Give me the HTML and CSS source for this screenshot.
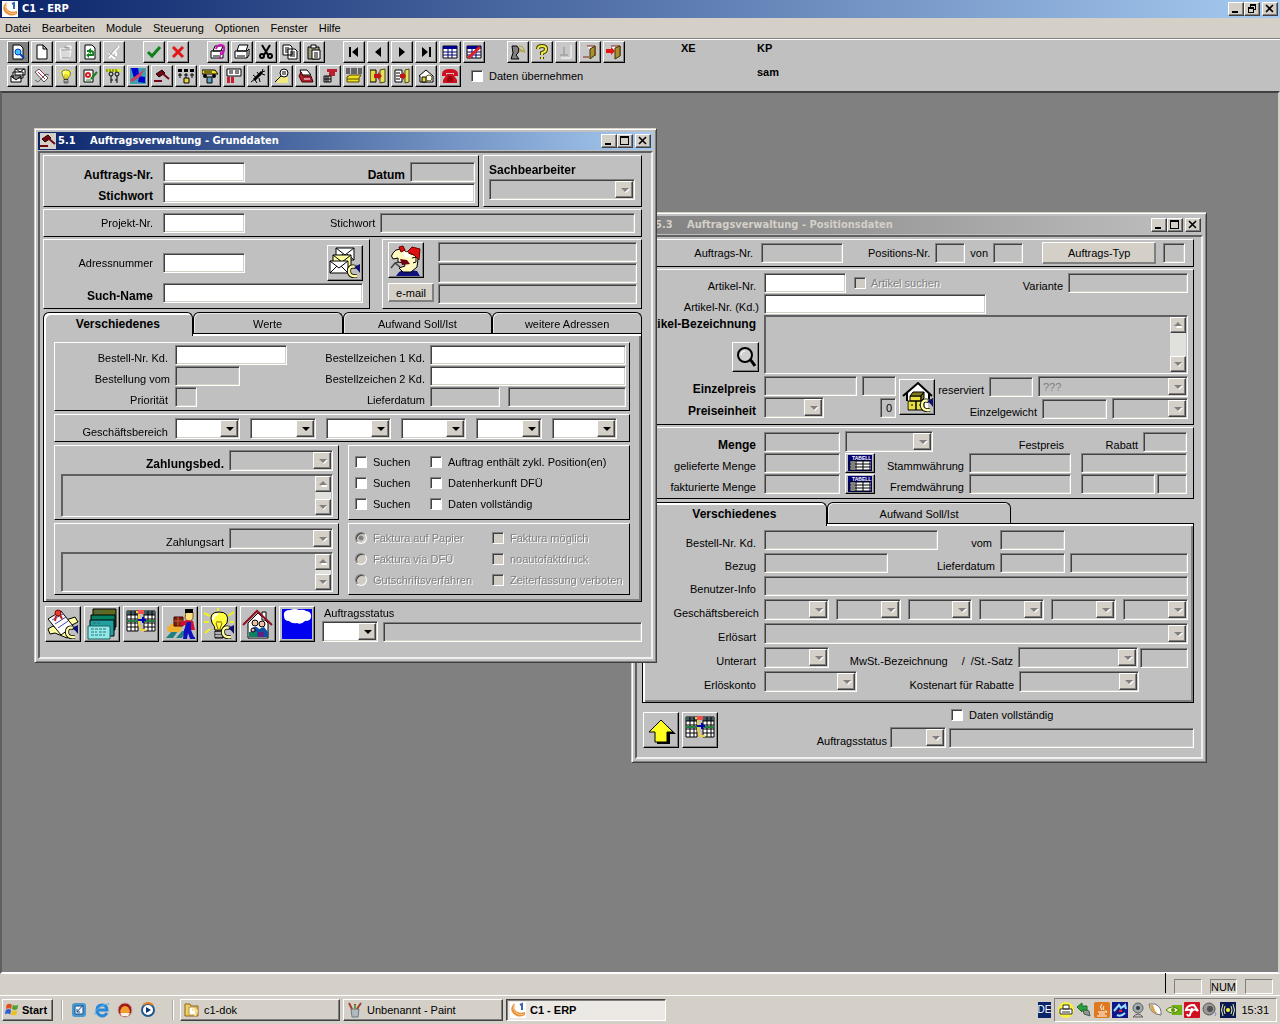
FILE: index.html
```html
<!DOCTYPE html>
<html lang="de">
<head>
    <meta charset="UTF-8">
    <meta name="viewport" content="width=device-width, initial-scale=1.0">
    <title>C1 - ERP</title>
    <link rel="stylesheet" href="styles.css">
</head>
<body>
    <!-- Shared icons -->
    <svg class="defs" aria-hidden="true">
        <symbol id="logo" viewBox="0 0 16 16">
            <rect width="16" height="16" fill="#fff"/>
            <path d="M5 1C0 4 0 10 5 13Q9 16 15 13V10Q9 12 6 9T5 1Z" fill="#e8923a"/>
            <path d="M4 3Q2 8 6 11T14 12" stroke="#f8c890" fill="none"/>
            <path d="M10 3l2-1v6" stroke="#3868b0" stroke-width="2" fill="none"/>
        </symbol>
        <symbol id="min" viewBox="0 0 12 10"><path d="M2 7h6v2H2z"/></symbol>
        <symbol id="max" viewBox="0 0 12 10"><path d="M1 0h9v9H1zM2 2v6h7V2z" fill-rule="evenodd"/></symbol>
        <symbol id="restore" viewBox="0 0 12 10"><path d="M4 0h6v6H8v3H2V3h2zM5 2v1h3v2h1V2zM3 5v3h4V5z" fill-rule="evenodd"/></symbol>
        <symbol id="close" viewBox="0 0 12 10"><path d="M2 1l7 7M9 1L2 8" stroke="#000" stroke-width="1.6"/></symbol>
        <symbol id="up" viewBox="0 0 8 8"><path d="M5 2L9 7H2z" fill="#fff"/><path d="M4 1L8 5H0z" fill="#808080"/></symbol>
        <symbol id="down" viewBox="0 0 8 8"><path d="M1 3h7L5 7z" fill="#fff"/><path d="M0 2h8L4 6z" fill="#808080"/></symbol>
        <symbol id="hammer" viewBox="0 0 16 16">
            <path d="M2 6L8 2l3 3-6 4z" fill="#700818" stroke="#200"/>
            <path d="M8 5l7 6" stroke="#700818" stroke-width="2"/>
            <path d="M0 12h8v2H0z" fill="#700818"/>
        </symbol>
        <symbol id="hook" viewBox="0 0 14 14">
            <path d="M10 3Q3 1 3 7t8 5" fill="none" stroke="#000" stroke-width="4"/>
            <path d="M10 3Q3 1 3 7t8 5" fill="none" stroke="#ffffa0" stroke-width="2.5"/>
            <path d="M8 3l6-3v9q-3-4-6-6z" fill="#101070"/>
        </symbol>
        <symbol id="bulb" viewBox="0 0 32 32">
            <path d="M1 5l6 3M1 14h5M2 25l5-4M31 4l-6 4M27 14h4M15 0v3" stroke="#f0f020" stroke-width="2"/>
            <path d="M12 22Q12 18 9 15 5 4 16 4t8 11q-4 3-4 7z" fill="#ffff40" stroke="#000"/>
            <path d="M10 12Q10 7 15 6" stroke="#fff" stroke-width="2" fill="none"/>
            <path d="M13 15l2 6M19 15l-2 6M13 14h6" stroke="#806000" fill="none"/>
            <path d="M12 23h8v7h-8z" fill="#606060" stroke="#000"/>
            <path d="M12 25h8M12 28h8" stroke="#fff"/>
        </symbol>
        <symbol id="sheets" viewBox="0 0 32 32">
            <path d="M2 3h11v20H2zM19 3h11v20H19z" fill="#fff" stroke="#000"/>
            <path d="M2 3h11v4H2zM19 3h11v4H19z" fill="#405860"/>
            <path d="M2 7h11M2 11h11M2 15h11M2 19h11M6 3v20M10 3v20M19 7h11M19 11h11M19 15h11M19 19h11M23 3v20M27 3v20" stroke="#000"/>
            <path d="M2 13h11M19 13h11" stroke="#208040" stroke-width="2"/>
            <path d="M13 2h6v4h-6z" fill="#f05050"/>
            <path d="M13 4h-2M14 6v10l2 6h5" stroke="#f0d040" stroke-width="2" fill="none"/>
            <path d="M13 12h8M18 9v6" stroke="#0000b0" stroke-width="2" fill="none"/>
        </symbol>
        <symbol id="tabell" viewBox="0 0 24 16">
            <path d="M0 0h24v16H0z" fill="#000070"/>
            <path d="M2 6h21v9H2z" fill="#fff"/>
            <path d="M2 6h21M2 9h21M2 12h21M2 15h21M2 6v9M8 6v9M15 6v9M22 6v9" stroke="#000"/>
            <path d="M3 7h4v8H3z" fill="#808080"/>
            <text x="4" y="5">TABELL</text>
        </symbol>
    </svg>

    <header class="titlebar">
        <svg class="i16"><use href="#logo"/></svg>
        <h1>C1 - ERP</h1>
        <div class="winbtns">
            <button aria-label="Minimieren"><svg><use href="#min"/></svg></button>
            <button aria-label="Verkleinern"><svg><use href="#restore"/></svg></button>
            <button aria-label="Schließen"><svg><use href="#close"/></svg></button>
        </div>
    </header>
    <nav class="menu">
        <a href="#">Datei</a>
        <a href="#">Bearbeiten</a>
        <a href="#">Module</a>
        <a href="#">Steuerung</a>
        <a href="#">Optionen</a>
        <a href="#">Fenster</a>
        <a href="#">Hilfe</a>
    </nav>

    <div class="toolbar">
        <div class="tools">
            <div class="toolrow">
                <div class="group">
                    <button class="on" aria-label="Suchmaske"><svg viewBox="0 0 16 16"><path d="M3 1h7l3 3v11H3z" fill="#fff" stroke="#000"/><circle cx="8" cy="8" r="3" fill="#40c0ff" stroke="#0040c0"/><path d="M10 10l4 4" stroke="#0040c0" stroke-width="2"/></svg></button>
                    <button aria-label="Neu"><svg viewBox="0 0 16 16"><path d="M3 1h6l4 4v10H3zM9 1v4h4" fill="#fff" stroke="#000"/></svg></button>
                    <button aria-label="Öffnen" disabled><svg viewBox="0 0 16 16"><path d="M2 5h5l1 2h5l-2 8H3zM9 2h4v3" fill="#d8d8d8" stroke="#fff"/><path d="M3 6h8M6 3l5 1M4 14h8" stroke="#989898"/></svg></button>
                    <button aria-label="Aktualisieren"><svg viewBox="0 0 16 16"><path d="M3 1h7l3 3v11H3z" fill="#fff" stroke="#000"/><path d="M5 7h4q3 0 2 4H6" fill="none" stroke="#108020" stroke-width="2"/><path d="M9 4L5 7l4 3zM7 9v5l-3-3z" fill="#108020"/></svg></button>
                    <button aria-label="Löschen" disabled><svg viewBox="0 0 16 16"><path d="M3 14L13 2M3 9l6 6M10 8v4" stroke="#fff" stroke-width="2"/><path d="M2 13L12 2M3 8l6 5" stroke="#a0a0a0"/></svg></button>
                </div>
                <div class="group">
                    <button aria-label="OK"><svg viewBox="0 0 16 16"><path d="M2 8l4 4 8-9" fill="none" stroke="#108018" stroke-width="3"/></svg></button>
                    <button aria-label="Abbrechen"><svg viewBox="0 0 16 16"><path d="M3 3l10 10M13 3L3 13" stroke="#e01818" stroke-width="3"/></svg></button>
                </div>
                <div class="group">
                    <button aria-label="Druckvorschau"><svg viewBox="0 0 16 16"><path d="M5 2h8l-2 5H3zM1 7h12v7H1zM3 12h8" fill="#fff" stroke="#000"/><path d="M6 5q1-4 5-4t3 5-3 3v2M10 13v2" fill="none" stroke="#d010c0" stroke-width="2"/></svg></button>
                    <button aria-label="Drucken"><svg viewBox="0 0 16 16"><path d="M5 1h9l-2 6H3zM1 7h12v7H1zM3 12h8M13 7l2-2v6l-2 3" fill="#fff" stroke="#000"/></svg></button>
                    <button aria-label="Ausschneiden"><svg viewBox="0 0 16 16"><path d="M4 1l6 10M12 1L6 11" stroke="#000" stroke-width="2"/><circle cx="4" cy="12" r="2" fill="none" stroke="#000" stroke-width="2"/><circle cx="12" cy="12" r="2" fill="none" stroke="#000" stroke-width="2"/></svg></button>
                    <button aria-label="Kopieren"><svg viewBox="0 0 16 16"><path d="M1 1h7l2 2v8H1zM6 5h7l2 2v8H6z" fill="#fff" stroke="#000"/><path d="M3 4h4M3 6h3M3 8h3M8 8h5M8 10h5M8 12h5" stroke="#000"/></svg></button>
                    <button aria-label="Einfügen"><svg viewBox="0 0 16 16"><path d="M2 3h11v12H2z" fill="#a0a080" stroke="#000"/><path d="M5 1h5v3H5zM6 6h8v9H6z" fill="#fff" stroke="#000"/><path d="M8 9h4M8 11h4M8 13h4" stroke="#000"/></svg></button>
                </div>
                <div class="group">
                    <button aria-label="Erster Satz"><svg viewBox="0 0 16 16"><path d="M3 3h2v10H3zM12 3v10L6 8z"/></svg></button>
                    <button aria-label="Voriger Satz"><svg viewBox="0 0 16 16"><path d="M11 3v10L5 8z"/></svg></button>
                    <button aria-label="Nächster Satz"><svg viewBox="0 0 16 16"><path d="M5 3v10l6-5z"/></svg></button>
                    <button aria-label="Letzter Satz"><svg viewBox="0 0 16 16"><path d="M4 3v10l6-5zM11 3h2v10h-2z"/></svg></button>
                    <button aria-label="Tabelle"><svg viewBox="0 0 16 16"><path d="M1 2h14v12H1z" fill="#fff" stroke="#000"/><path d="M1 2h14v3H1z" fill="#000090"/><path d="M1 8h14M1 11h14M6 5v9M10 5v9" stroke="#000070"/></svg></button>
                    <button aria-label="Tabelle aus"><svg viewBox="0 0 16 16"><path d="M1 2h14v12H1z" fill="#fff" stroke="#000"/><path d="M1 2h14v3H1z" fill="#000090"/><path d="M1 8h14M1 11h14M6 5v9M10 5v9" stroke="#000070"/><path d="M2 14L14 3" stroke="#e02020" stroke-width="3"/></svg></button>
                </div>
                <div class="group wide">
                    <button aria-label="Sprache"><svg viewBox="0 0 16 16"><path d="M2 2h5l2 3-1 4-2 2 3 4H1l2-6z" fill="#808080" stroke="#000"/><path d="M9 5q3 0 3 3M9 2q6 0 5 7M9 7h6" fill="none" stroke="#b0a020"/></svg></button>
                    <button aria-label="Hilfe"><svg viewBox="0 0 16 16"><path d="M4 5q0-3 4-3t4 3-4 4v2M8 13v2" fill="none" stroke="#404000" stroke-width="4"/><path d="M4 5q0-3 4-3t4 3-4 4v2M8 13v2" fill="none" stroke="#f0e840" stroke-width="2"/></svg></button>
                    <button aria-label="Protokoll" disabled><svg viewBox="0 0 16 16"><path d="M6 3v8M2 11h8" stroke="#909090"/><path d="M13 1v13H3" stroke="#fff" fill="none"/></svg></button>
                    <button aria-label="Modul schließen"><svg viewBox="0 0 16 16"><path d="M5 2h8v10" fill="#fff" stroke="#802010"/><path d="M8 5l5-3v9l-5 4z" fill="#a89030" stroke="#403000"/><path d="M1 13h6" stroke="#802010"/></svg></button>
                    <button aria-label="Beenden"><svg viewBox="0 0 16 16"><path d="M5 2h9v10" fill="#fff" stroke="#802010"/><path d="M9 4l5-2v10l-5 3z" fill="#a89030" stroke="#403000"/><path d="M9 7L5 3v2H0v4h5v2z" fill="#e01818"/></svg></button>
                </div>
            </div>
            <div class="toolrow">
                <div class="group">
                    <button aria-label="Adressen"><svg viewBox="0 0 16 16"><path d="M5 1h10v6H5zM3 4h10v6H3zM1 8h10v6H1z" fill="#fff" stroke="#000"/><path d="M1 8l5 4 5-4M6 1l4 3 4-3" stroke="#000" fill="none"/></svg></button>
                    <button aria-label="Angebote"><svg viewBox="0 0 16 16"><path d="M1 4l4-3 9 9-4 4z" fill="#fff" stroke="#505050"/><path d="M4 4l7 7M6 2l3 3" stroke="#c02040"/><path d="M1 12l3 2 8-8 3 1" fill="none" stroke="#606060"/></svg></button>
                    <button aria-label="Ideen"><svg viewBox="0 0 32 32"><use href="#bulb"/></svg></button>
                    <button aria-label="Notizen"><svg viewBox="0 0 16 16"><path d="M2 2h9v12H2z" fill="#fff" stroke="#000"/><circle cx="6" cy="7" r="2" fill="none" stroke="#d02020" stroke-width="2"/><path d="M4 12h5" stroke="#108020"/><path d="M9 11l6-7" stroke="#108020" stroke-width="2"/></svg></button>
                    <button aria-label="Schlüssel"><svg viewBox="0 0 16 16"><path d="M0 1h15v3H0z" fill="#d8e830"/><path d="M1 1v3M4 1v3M7 1v3M10 1v3" stroke="#506000"/><circle cx="5" cy="6" r="2" fill="none" stroke="#000"/><circle cx="11" cy="6" r="2" fill="none" stroke="#000"/><path d="M5 8v7M5 12h2M11 8v7M9 12h2" stroke="#000"/></svg></button>
                    <button aria-label="Grafik"><svg viewBox="0 0 16 16"><path d="M0 0h16v16H0z" fill="#40a0b0"/><path d="M1 0h7l1 6-5 4zM9 8l6 1v6l-7-1z" fill="#0000d0"/><path d="M0 12L15 1l-5 8-8 5z" fill="#c84060"/></svg></button>
                    <button aria-label="Aufträge"><svg><use href="#hammer"/></svg></button>
                    <button aria-label="Struktur"><svg viewBox="0 0 16 16"><path d="M0 1h4v3H0zM6 1h4v3H6zM12 1h4v3h-4z"/><path d="M2 5v5M8 5v5M14 5v5M0 7h4M6 7h4M12 7h4" stroke="#000"/><path d="M6 10h5v5H6z" fill="#e8d840" stroke="#000"/></svg></button>
                    <button aria-label="Lieferung"><svg viewBox="0 0 16 16"><path d="M0 2h13l3 4H0z" fill="#f0e020" stroke="#000"/><path d="M2 4h8" stroke="#000"/><circle cx="3" cy="8" r="2"/><circle cx="12" cy="8" r="2"/><path d="M5 9h5v6H5z" fill="#60a0c0" stroke="#000"/></svg></button>
                    <button aria-label="Fertigung"><svg viewBox="0 0 16 16"><path d="M1 1h14v7H1z" fill="#fff" stroke="#000"/><path d="M3 3h4M3 5h4M9 3h4M9 5h4" stroke="#000"/><path d="M1 9h3v6H1zM5 9h3v6H5z" fill="#c02030"/></svg></button>
                    <button aria-label="Fehler"><svg viewBox="0 0 16 16"><path d="M1 14l4-3M3 7l4 3M7 4l3 4M12 6l3 1M9 10l1 4M5 12l2 3M12 4l1-3M12 4l3-1" stroke="#000"/><path d="M4 12L12 4" stroke="#000" stroke-width="3"/></svg></button>
                    <button aria-label="Suche"><svg viewBox="0 0 16 16"><path d="M3 9h11v6H3z" fill="#f0e880"/><circle cx="10" cy="5" r="4" fill="#fff" stroke="#000"/><path d="M7 8L1 14M8 4h4M8 6h4" stroke="#000"/></svg></button>
                    <button aria-label="Rechnung"><svg viewBox="0 0 16 16"><path d="M2 2h7l4 5H4z" fill="#fff" stroke="#000"/><path d="M1 8l2-4 2 4h8l2 6H4z" fill="#b02030" stroke="#400"/><path d="M6 11h6" stroke="#fff"/></svg></button>
                    <button aria-label="Anruf"><svg viewBox="0 0 16 16"><path d="M5 1h10v3h-2v4H7V4H5z" fill="#b82030"/><path d="M2 8h7v6H2z" fill="#d0d0d0" stroke="#000"/><path d="M4 8v6M6 8v6M2 11h7" stroke="#000"/></svg></button>
                    <button aria-label="Barcode"><svg viewBox="0 0 16 16"><path d="M1 0v6M3 0v6M6 0v6M8 0v6M10 0v6M13 0v6M15 0v6" stroke="#000"/><path d="M1 9l3-2h11l-2 3v4H1z" fill="#f0e020" stroke="#504800"/><path d="M1 11h12" stroke="#504800"/></svg></button>
                    <button aria-label="Wareneingang"><svg viewBox="0 0 16 16"><path d="M0 2h6v12H0z" fill="#e8d840" stroke="#000"/><path d="M10 2l5-1v13l-5 1z" fill="#e8e060" stroke="#504800"/><path d="M4 6h4V4l4 4-4 4v-2H4z" fill="#c01818"/></svg></button>
                    <button aria-label="Warenausgang"><svg viewBox="0 0 16 16"><path d="M1 2h7v12H1z" fill="#fff" stroke="#000"/><path d="M2 5h4M2 8h4M2 11h4" stroke="#000"/><path d="M11 2l4-1v13l-4 1z" fill="#e8e060" stroke="#504800"/><path d="M6 6h3V4l3 4-3 4v-2H6z" fill="#c01818"/></svg></button>
                    <button aria-label="Lager"><svg viewBox="0 0 16 16"><path d="M1 8l7-6 7 6v6H2V8z" fill="#fff" stroke="#000"/><path d="M4 9h4v5H4z" fill="#e0d840" stroke="#000"/><circle cx="11" cy="10" r="3" fill="none" stroke="#606020"/></svg></button>
                    <button aria-label="Telefon"><svg viewBox="0 0 16 16"><path d="M0 6q0-5 8-5t8 5v2h-4V5H4v3H0zM5 6h6l4 6v3H1v-3z" fill="#d01020"/><path d="M6 9h4M5 11h6M5 13h6" stroke="#600"/></svg></button>
                </div>
                <label class="check"><input type="checkbox">Daten übernehmen</label>
            </div>
        </div>
        <div class="info">
            <b>XE</b><b>KP</b>
            <b></b><b>sam</b>
        </div>
    </div>

    <main class="workspace">
        <!-- 5.3 Positionsdaten -->
        <section class="window positions">
            <div class="titlebar inactive">
                <svg class="i16"><use href="#hammer"/></svg>
                <h2><span>5.3</span>Auftragsverwaltung - Positionsdaten</h2>
                <div class="winbtns">
                    <button aria-label="Minimieren"><svg><use href="#min"/></svg></button>
                    <button aria-label="Maximieren"><svg><use href="#max"/></svg></button>
                    <button aria-label="Schließen"><svg><use href="#close"/></svg></button>
                </div>
            </div>
            <div class="client">
                <div class="panel row head">
                    <label class="lbl" for="p-auftrag">Auftrags-Nr.</label>
                    <input class="w82" id="p-auftrag" disabled>
                    <label for="p-pos" class="push">Positions-Nr.</label>
                    <input class="w30" id="p-pos" disabled>
                    <label for="p-von">von</label>
                    <input class="w30" id="p-von" disabled>
                    <button class="btn typ">Auftrags-Typ</button>
                    <input class="w22" aria-label="Auftrags-Typ" disabled>
                </div>

                <div class="panel article">
                    <div class="row">
                        <label class="lbl" for="p-artikel">Artikel-Nr.</label>
                        <input class="w82" id="p-artikel">
                        <label class="check off"><input type="checkbox" disabled>Artikel suchen</label>
                        <label class="end" for="p-variante">Variante</label>
                        <input class="w120" id="p-variante" disabled>
                    </div>
                    <div class="row">
                        <label class="lbl near" for="p-kd">Artikel-Nr. (Kd.)</label>
                        <input class="w222" id="p-kd">
                    </div>
                    <div class="row memo-row">
                        <div class="lbl describe">
                            <label for="p-bez"><b>Artikel-Bezeichnung</b></label>
                            <button class="icon lens" aria-label="Artikel suchen"><svg viewBox="0 0 20 20"><circle cx="9" cy="8" r="7" fill="#d0d0d0" stroke="#000" stroke-width="2"/><path d="M5 8q0-4 4-4" stroke="#fff" fill="none"/><path d="M14 12l5 7" stroke="#000" stroke-width="3"/></svg></button>
                        </div>
                        <div class="memo">
                            <textarea id="p-bez" disabled></textarea>
                            <div class="scroll"><button aria-label="Nach oben" disabled><svg><use href="#up"/></svg></button><button aria-label="Nach unten" disabled><svg><use href="#down"/></svg></button></div>
                        </div>
                    </div>
                    <div class="split">
                        <div class="rows">
                            <div class="row">
                                <label class="lbl" for="p-preis"><b>Einzelpreis</b></label>
                                <input class="w93" id="p-preis" disabled>
                                <input class="w34" aria-label="Währung" disabled>
                            </div>
                            <div class="row">
                                <label class="lbl" for="p-einheit"><b>Preiseinheit</b></label>
                                <span class="combo w60"><select id="p-einheit" disabled></select></span>
                                <input class="count end" aria-label="Anzahl" value="0" readonly>
                            </div>
                        </div>
                        <button class="icon big" aria-label="Lager"><svg viewBox="0 0 32 32"><path d="M6 13L17 3l10 10v16H6z" fill="#fff"/><path d="M2 15L17 2l14 13M6 12v8M28 13v6" fill="none" stroke="#000" stroke-width="2"/><path d="M7 20h8v9H7zM15 20h8v9h-8zM9 15h11v5H9z" fill="#e8e040" stroke="#000"/><path d="M9 15l3-4h11l-3 4zM20 15l3-4v6l-3 3z" fill="#807820" stroke="#000"/><path d="M10 24h2M18 24h2" stroke="#000"/><use href="#hook" x="18" y="17" width="14" height="14"/></svg></button>
                        <div class="rows grow">
                            <div class="row right">
                                <label for="p-res">reserviert</label>
                                <input class="w44" id="p-res" disabled>
                                <span class="combo w150"><select aria-label="Lagerort" disabled><option>???</option></select></span>
                            </div>
                            <div class="row right">
                                <label for="p-gewicht">Einzelgewicht</label>
                                <input class="w65" id="p-gewicht" disabled>
                                <span class="combo w76"><select aria-label="Gewichtseinheit" disabled></select></span>
                            </div>
                        </div>
                    </div>
                </div>

                <div class="panel amounts">
                    <div class="row">
                        <label class="lbl" for="p-menge"><b>Menge</b></label>
                        <input class="w76" id="p-menge" disabled>
                        <span class="combo w88"><select aria-label="Mengeneinheit" disabled></select></span>
                        <span class="end">Festpreis</span>
                        <label class="rabatt" for="p-rabatt">Rabatt</label>
                        <input class="w44" id="p-rabatt" disabled>
                    </div>
                    <div class="row">
                        <label class="lbl" for="p-gel">gelieferte Menge</label>
                        <input class="w76" id="p-gel" disabled>
                        <button class="icon table-btn" aria-label="Tabelle gelieferte Menge"><svg><use href="#tabell"/></svg></button>
                        <label class="end" for="p-stamm">Stammwährung</label>
                        <input class="w102" id="p-stamm" disabled>
                        <input class="w106 apart" aria-label="Rabatt Stammwährung" disabled>
                    </div>
                    <div class="row">
                        <label class="lbl" for="p-fakt">fakturierte Menge</label>
                        <input class="w76" id="p-fakt" disabled>
                        <button class="icon table-btn" aria-label="Tabelle fakturierte Menge"><svg><use href="#tabell"/></svg></button>
                        <label class="end" for="p-fremd">Fremdwährung</label>
                        <input class="w102" id="p-fremd" disabled>
                        <span class="pair w106 apart"><input class="grow" aria-label="Rabatt Fremdwährung" disabled><input class="w30" aria-label="Fremdwährung Kürzel" disabled></span>
                    </div>
                </div>

                <div class="tabs">
                    <button class="tab active">Verschiedenes</button>
                    <button class="tab">Aufwand Soll/Ist</button>
                    <span class="tab-rest"></span>
                </div>
                <div class="sheet details">
                    <div class="row">
                        <label class="lbl" for="d-best">Bestell-Nr. Kd.</label>
                        <input class="w174" id="d-best" disabled>
                        <label class="end vom" for="d-vom">vom</label>
                        <input class="w65" id="d-vom" disabled>
                        <span class="w118"></span>
                    </div>
                    <div class="row">
                        <label class="lbl" for="d-bezug">Bezug</label>
                        <input class="w124" id="d-bezug" disabled>
                        <label class="end" for="d-liefer">Lieferdatum</label>
                        <input class="w65" id="d-liefer" disabled>
                        <input class="w118" aria-label="Lieferdatum Text" disabled>
                    </div>
                    <div class="row">
                        <label class="lbl" for="d-info">Benutzer-Info</label>
                        <input class="grow" id="d-info" disabled>
                    </div>
                    <div class="row">
                        <label class="lbl near" for="d-gb">Geschäftsbereich</label>
                        <div class="six">
                            <span class="combo"><select id="d-gb" disabled></select></span>
                            <span class="combo"><select aria-label="Geschäftsbereich 2" disabled></select></span>
                            <span class="combo"><select aria-label="Geschäftsbereich 3" disabled></select></span>
                            <span class="combo"><select aria-label="Geschäftsbereich 4" disabled></select></span>
                            <span class="combo"><select aria-label="Geschäftsbereich 5" disabled></select></span>
                            <span class="combo"><select aria-label="Geschäftsbereich 6" disabled></select></span>
                        </div>
                    </div>
                    <div class="row">
                        <label class="lbl" for="d-art">Erlösart</label>
                        <span class="combo grow"><select id="d-art" disabled></select></span>
                    </div>
                    <div class="row">
                        <label class="lbl" for="d-unter">Unterart</label>
                        <span class="combo w65"><select id="d-unter" disabled></select></span>
                        <label class="end mwst" for="d-mwst"><span>MwSt.-Bezeichnung</span><span>/&nbsp; /St.-Satz</span></label>
                        <span class="pair"><span class="combo w120"><select id="d-mwst" disabled></select></span><input class="w48" aria-label="MwSt.-Satz" disabled></span>
                    </div>
                    <div class="row">
                        <label class="lbl" for="d-konto">Erlöskonto</label>
                        <span class="combo w93"><select id="d-konto" disabled></select></span>
                        <label class="end" for="d-kosten">Kostenart für Rabatte</label>
                        <span class="combo w120"><select id="d-kosten" disabled></select></span>
                        <span class="w44"></span>
                    </div>
                </div>

                <div class="foot">
                    <button class="icon big" aria-label="Zurück"><svg viewBox="0 0 32 32"><path d="M18 8l13 12h-6v10H12v-8z"/><path d="M16 6l12 12h-6v10H10V18H4z" fill="#ffff20" stroke="#000"/></svg></button>
                    <button class="icon big" aria-label="Tabellen"><svg><use href="#sheets"/></svg></button>
                    <div class="status-fields">
                        <label class="check"><input type="checkbox">Daten vollständig</label>
                        <div class="row right">
                            <label for="p-status">Auftragsstatus</label>
                            <span class="combo w56"><select id="p-status" disabled></select></span>
                            <input class="w245" aria-label="Auftragsstatus Text" disabled>
                        </div>
                    </div>
                </div>
            </div>
        </section>

        <!-- 5.1 Grunddaten -->
        <section class="window basics">
            <div class="titlebar">
                <svg class="i16 boxed"><use href="#hammer"/></svg>
                <h2><span>5.1</span>Auftragsverwaltung - Grunddaten</h2>
                <div class="winbtns">
                    <button aria-label="Minimieren"><svg><use href="#min"/></svg></button>
                    <button aria-label="Maximieren"><svg><use href="#max"/></svg></button>
                    <button aria-label="Schließen"><svg><use href="#close"/></svg></button>
                </div>
            </div>
            <div class="client">
                <div class="side">
                    <div class="panel order">
                        <div class="row">
                            <label class="lbl" for="g-nr"><b>Auftrags-Nr.</b></label>
                            <input class="w82" id="g-nr" autofocus>
                            <label class="end" for="g-datum"><b>Datum</b></label>
                            <input class="w65" id="g-datum" disabled>
                        </div>
                        <div class="row">
                            <label class="lbl" for="g-stich"><b>Stichwort</b></label>
                            <input class="grow" id="g-stich">
                        </div>
                    </div>
                    <div class="panel clerk">
                        <label for="g-sach"><b>Sachbearbeiter</b></label>
                        <span class="combo"><select id="g-sach" disabled></select></span>
                    </div>
                </div>

                <div class="panel row project">
                    <label class="lbl" for="g-proj">Projekt-Nr.</label>
                    <input class="w82" id="g-proj">
                    <label class="stich" for="g-pstich">Stichwort</label>
                    <input class="grow" id="g-pstich" disabled>
                </div>

                <div class="side contact">
                    <div class="panel address">
                        <div class="row">
                            <label class="lbl" for="g-adr">Adressnummer</label>
                            <input class="w82" id="g-adr">
                            <button class="icon big end" aria-label="Adressen"><svg viewBox="0 0 32 32"><path d="M7 1h18v12H7z" fill="#fff" stroke="#000"/><path d="M7 1l9 7 9-7M7 13l7-6M25 13l-7-6" fill="none" stroke="#000"/><path d="M4 8h18v12H4z" fill="#ffffa0" stroke="#000"/><path d="M4 8l9 7 9-7" fill="none" stroke="#000"/><path d="M1 14h18v12H1z" fill="#fff" stroke="#000"/><path d="M1 14l9 7 9-7M1 26l7-7M19 26l-7-7" fill="none" stroke="#000"/><use href="#hook" x="17" y="17" width="14" height="14"/></svg></button>
                        </div>
                        <div class="row">
                            <label class="lbl" for="g-such"><b>Such-Name</b></label>
                            <input class="grow" id="g-such">
                        </div>
                    </div>
                    <div class="panel mail">
                        <div class="mail-btns">
                            <button class="icon big" aria-label="Ansprechpartner"><svg viewBox="0 0 32 32"><path d="M9 28l6-3 12 2 3 5H6z" fill="#101080"/><path d="M3 9l3-3q5-2 8 0l4 3 6 2 4 4-1 8-6 5h-8l-4-4 6-2-1-3-6-1v-4l-5 1q-3-3 0-6z" fill="#fff8c0" stroke="#000"/><path d="M9 3l4-1 2 4-4 2zM17 8l5-5 8 2-1 11-5-5z" fill="#e01010" stroke="#600"/><path d="M13 9l5-1 2 6-5-1z" fill="#fff"/><path d="M10 15l7 1 3 4-8 1z" fill="#700010"/><path d="M1 24l4-5 5 4M5 19l4-1" fill="none" stroke="#404040" stroke-width="1.5"/><path d="M22 14l4-1v5l-3 1" fill="none" stroke="#000"/></svg></button>
                            <button class="btn">e-mail</button>
                        </div>
                        <div class="rows grow">
                            <input aria-label="Adresszeile 1" disabled>
                            <input aria-label="Adresszeile 2" disabled>
                            <input aria-label="Adresszeile 3" disabled>
                        </div>
                    </div>
                </div>

                <div class="tabs">
                    <button class="tab active">Verschiedenes</button>
                    <button class="tab">Werte</button>
                    <button class="tab">Aufwand Soll/Ist</button>
                    <button class="tab">weitere Adressen</button>
                </div>
                <div class="sheet misc">
                    <div class="panel purchase">
                        <div class="row">
                            <label class="lbl" for="v-best">Bestell-Nr. Kd.</label>
                            <input class="w112" id="v-best">
                            <label class="end" for="v-z1">Bestellzeichen 1 Kd.</label>
                            <input class="w196" id="v-z1">
                        </div>
                        <div class="row">
                            <label class="lbl near" for="v-vom">Bestellung vom</label>
                            <input class="w65" id="v-vom" disabled>
                            <label class="end" for="v-z2">Bestellzeichen 2 Kd.</label>
                            <input class="w196" id="v-z2">
                        </div>
                        <div class="row">
                            <label class="lbl" for="v-prio">Priorität</label>
                            <input class="w22" id="v-prio" disabled>
                            <label class="end" for="v-liefer">Lieferdatum</label>
                            <span class="pair w196"><input class="w70" id="v-liefer" disabled><input class="w118" aria-label="Lieferdatum Text" disabled></span>
                        </div>
                    </div>
                    <div class="panel row division">
                        <label class="lbl" for="v-gb">Geschäftsbereich</label>
                        <div class="six">
                            <span class="combo"><select id="v-gb"></select></span>
                            <span class="combo"><select aria-label="Geschäftsbereich 2"></select></span>
                            <span class="combo"><select aria-label="Geschäftsbereich 3"></select></span>
                            <span class="combo"><select aria-label="Geschäftsbereich 4"></select></span>
                            <span class="combo"><select aria-label="Geschäftsbereich 5"></select></span>
                            <span class="combo"><select aria-label="Geschäftsbereich 6"></select></span>
                        </div>
                    </div>
                    <div class="pay-grid">
                        <div class="panel pay">
                            <div class="row right">
                                <label for="v-zb"><b>Zahlungsbed.</b></label>
                                <span class="combo w104"><select id="v-zb" disabled></select></span>
                            </div>
                            <div class="memo">
                                <textarea aria-label="Zahlungsbedingung" disabled></textarea>
                                <div class="scroll"><button aria-label="Nach oben" disabled><svg><use href="#up"/></svg></button><button aria-label="Nach unten" disabled><svg><use href="#down"/></svg></button></div>
                            </div>
                        </div>
                        <div class="panel checks">
                            <label class="check"><input type="checkbox">Suchen</label>
                            <label class="check"><input type="checkbox">Auftrag enthält zykl. Position(en)</label>
                            <label class="check"><input type="checkbox">Suchen</label>
                            <label class="check"><input type="checkbox">Datenherkunft DFÜ</label>
                            <label class="check"><input type="checkbox">Suchen</label>
                            <label class="check"><input type="checkbox">Daten vollständig</label>
                        </div>
                        <div class="panel pay">
                            <div class="row right">
                                <label for="v-za">Zahlungsart</label>
                                <span class="combo w104"><select id="v-za" disabled></select></span>
                            </div>
                            <div class="memo">
                                <textarea aria-label="Zahlungsart Text" disabled></textarea>
                                <div class="scroll"><button aria-label="Nach oben" disabled><svg><use href="#up"/></svg></button><button aria-label="Nach unten" disabled><svg><use href="#down"/></svg></button></div>
                            </div>
                        </div>
                        <div class="panel checks invoice">
                            <label class="check off"><input type="radio" name="faktura" checked disabled>Faktura auf Papier</label>
                            <label class="check off"><input type="checkbox" disabled>Faktura möglich</label>
                            <label class="check off"><input type="radio" name="faktura" disabled>Faktura via DFÜ</label>
                            <label class="check off"><input type="checkbox" disabled>noautofaktdruck</label>
                            <label class="check off"><input type="radio" name="faktura" disabled>Gutschriftsverfahren</label>
                            <label class="check off"><input type="checkbox" disabled>Zeiterfassung verboten</label>
                        </div>
                    </div>
                </div>

                <div class="foot">
                    <button class="icon big" aria-label="Dokumente"><svg viewBox="0 0 32 32"><path d="M1 21l5-3 18 10-4 2-12-5-5 1zM19 12l9-3 3 5-8 4z" fill="#ffffa0" stroke="#000"/><path d="M1 11l13-8 12 15-12 9z" fill="#fff" stroke="#000"/><path d="M5 12l11-6M8 16l11-7M11 20l10-7" stroke="#4040a0"/><circle cx="11" cy="5" r="3" fill="#e04030" stroke="#800"/><path d="M9 8l-1 5M13 7l2 4" stroke="#c02020" stroke-width="2"/><use href="#hook" x="17" y="17" width="14" height="14"/></svg></button>
                    <button class="icon big" aria-label="Karteien"><svg viewBox="0 0 32 32"><path d="M7 1h23v18H7z" fill="#606820" stroke="#000"/><path d="M5 7h24v15H5z" fill="#008060" stroke="#000"/><path d="M4 12h24v16H4z" fill="#20a0a0" stroke="#000"/><path d="M2 18h22v13H2z" fill="#90e8e8" stroke="#206060"/><path d="M5 21h15M5 24h6M13 24h8M5 27h14M9 4h8M8 10h8M7 15h8" stroke="#307070" stroke-dasharray="3 1"/></svg></button>
                    <button class="icon big" aria-label="Tabellen"><svg><use href="#sheets"/></svg></button>
                    <button class="icon big" aria-label="Versand"><svg viewBox="0 0 32 32"><path d="M2 30l6-7h6l-5 7zM12 30l6-7h4l-4 7z" fill="#208080"/><path d="M3 20l4-4h12l-3 8H4z" fill="#f0b030"/><path d="M10 9h9v9h-9z" fill="#802010" stroke="#400"/><path d="M14 9v9M10 13h9" stroke="#c06030"/><path d="M22 4h7v6l-2 3h-4l-2-3z" fill="#ffe080" stroke="#806020"/><path d="M21 1h8v4h-8z" fill="#000"/><path d="M17 14l6-2 6 1 2 9h-8l-2-5-5 1z" fill="#d01030"/><path d="M23 14h4v8l3 7h1v2h-5l-2-6-1 6h-4l1-9z" fill="#1010c0"/></svg></button>
                    <button class="icon big" aria-label="Ideen"><svg viewBox="0 0 32 32"><use href="#bulb"/><use href="#hook" x="17" y="17" width="14" height="14"/></svg></button>
                    <button class="icon big" aria-label="Haushalt"><svg viewBox="0 0 32 32"><path d="M6 15L16 5l10 10v15H6z" fill="#fff" stroke="#000"/><path d="M20 4h4v8h-4z" fill="#fff" stroke="#000"/><path d="M1 17L15 3l15 14" fill="none" stroke="#901020" stroke-width="2"/><circle cx="13" cy="15" r="3" fill="#f0c0a0" stroke="#000"/><circle cx="20" cy="16" r="3" fill="#f0c0a0" stroke="#000"/><path d="M9 22q4-6 8-1l5-2 4 5v5H7z" fill="#1050a0"/><path d="M7 24h8v5H7z" fill="#108060"/><path d="M16 24h6v5h-6z" fill="#602080"/><circle cx="11" cy="22" r="2" fill="#f0c0a0" stroke="#000"/></svg></button>
                    <button class="icon big" aria-label="Info"><svg viewBox="0 0 32 32"><path d="M1 1h30v30H1z" fill="#0000f0"/><path d="M3 8q-1-6 6-6 5-2 9 0 5-1 7 1 6 1 5 6 0 4-6 4-4 4-8 2-5 1-8-2-5 0-5-5z" fill="#fff"/></svg></button>
                    <div class="status-fields">
                        <label for="g-status">Auftragsstatus</label>
                        <div class="row">
                            <span class="combo w56"><select id="g-status"></select></span>
                            <input class="grow" aria-label="Auftragsstatus Text" disabled>
                        </div>
                    </div>
                </div>
            </div>
        </section>
    </main>

    <div class="statusbar">
        <span class="cell"></span>
        <span class="cell num">NUM</span>
        <span class="cell"></span>
    </div>

    <footer class="taskbar">
        <button class="task start"><svg viewBox="0 0 18 18"><path d="M3 3q3-2 6 0L8 8Q5 6 2 8z" fill="#e05020"/><path d="M10 3q3 2 6 0l-1 5q-3 2-6 0z" fill="#50a030"/><path d="M2 9q3-2 6 0l-1 5q-3-2-6 0z" fill="#3060d0"/><path d="M9 9q3 2 6 0l-1 5q-3 2-6 0z" fill="#f0c020"/></svg>Start</button>
        <div class="quick">
            <button aria-label="Desktop anzeigen"><svg viewBox="0 0 16 16"><rect x="1" y="1" width="14" height="14" rx="3" fill="#4898d0"/><path d="M4 4h8v8H4z" fill="#e8f4ff" stroke="#205080"/><path d="M6 10l6-7M6 7v3h3" stroke="#205080" fill="none"/></svg></button>
            <button aria-label="Internet Explorer"><svg viewBox="0 0 16 16"><path d="M13 11q-2 3-5 3-5-1-5-6t5-5 5 5H4" fill="none" stroke="#2888d8" stroke-width="3"/><path d="M1 13Q0 8 8 4t7-1" fill="none" stroke="#60b0e8"/></svg></button>
            <button aria-label="Browser"><svg viewBox="0 0 16 16"><circle cx="8" cy="8" r="7" fill="#a01818" stroke="#c8a0a0"/><path d="M3 10q1-6 5-6t5 6l-3 2H6z" fill="#f0a030"/><path d="M3 11h10l-2 3H5z" fill="#fff0e0"/></svg></button>
            <button aria-label="Media Player"><svg viewBox="0 0 16 16"><circle cx="8" cy="8" r="6" fill="#fff" stroke="#205890" stroke-width="2"/><path d="M3 3q5-4 10 0" stroke="#e08030" stroke-width="2" fill="none"/><path d="M6 5l5 3-5 3z" fill="#103070"/></svg></button>
        </div>
        <div class="tasks">
            <button class="task"><svg viewBox="0 0 16 16"><path d="M1 2h5l1 2h7v10H1z" fill="#f0d060" stroke="#906010"/><path d="M5 5h7v8H5z" fill="#fff" stroke="#b09040"/><path d="M8 8q4-2 5 1l-2 5" fill="none" stroke="#f8e090" stroke-width="2"/></svg>c1-dok</button>
            <button class="task"><svg viewBox="0 0 16 16"><path d="M4 7h8l-1 8H5z" fill="#b0b8c0" stroke="#707880"/><path d="M5 7L2 1M8 7V2M10 7l4-6" stroke="#a04030" stroke-width="2"/><path d="M7 3h2v4H7z" fill="#60a040"/></svg>Unbenannt - Paint</button>
            <button class="task current"><svg><use href="#logo"/></svg>C1 - ERP</button>
        </div>
        <span class="lang">DE</span>
        <div class="tray">
            <svg viewBox="0 0 16 16"><circle cx="8" cy="8" r="8" fill="#f8f040"/><path d="M5 3h6v4H5zM2 7h12v5H2z" fill="#fff" stroke="#303030"/><path d="M4 10h8" stroke="#303030"/></svg>
            <svg viewBox="0 0 16 16"><path d="M7 7l6 2 1 5-6-2z" fill="#909890" stroke="#505850"/><path d="M1 5l5-4v3h5v4H6v2z" fill="#30a040" stroke="#107020"/></svg>
            <svg viewBox="0 0 16 16"><rect width="16" height="16" rx="2" fill="#e07820"/><path d="M8 2q-3 3 0 6M10 4q-2 2 0 4M4 10h7M5 12h6M3 14h10M11 9q3 0 1 2" fill="none" stroke="#fff"/></svg>
            <svg viewBox="0 0 16 16"><path d="M0 0h16v16H0z" fill="#101888"/><path d="M2 9L7 3l2 3 4-3M5 13q4 2 8-2M11 5l2-2 1 4" fill="none" stroke="#a0e0ff" stroke-width="2"/><path d="M7 9h3" stroke="#f02020" stroke-width="2"/></svg>
            <svg viewBox="0 0 16 16"><circle cx="8" cy="6" r="5" fill="#a0a8b0" stroke="#606060"/><circle cx="8" cy="6" r="2" fill="#303840"/><path d="M3 15q5-6 10 0z" fill="#c0c0c0" stroke="#606060"/></svg>
            <svg viewBox="0 0 16 16"><path d="M1 2h6q7 3 6 11Q2 12 1 2z" fill="#fff" stroke="#707070"/><path d="M2 3h3q1 5 5 9-7-1-8-9z" fill="#d8a850"/></svg>
            <svg viewBox="0 0 16 16"><path d="M6 3h10v10H6z" fill="#70b010"/><path d="M0 8q6-6 13 0-7 6-13 0z" fill="#e8f8c0" stroke="#508008"/><circle cx="7" cy="8" r="2" fill="#609010"/></svg>
            <svg viewBox="0 0 16 16"><rect width="16" height="16" rx="1" fill="#d01020"/><path d="M2 8q1-5 8-5l4 6q-4-3-6 0-2-2-6-1zM8 6l-2 7q-2 2-3-1" fill="none" stroke="#fff" stroke-width="2"/></svg>
            <svg viewBox="0 0 16 16"><circle cx="7" cy="7" r="6" fill="#989898" stroke="#585858"/><circle cx="8" cy="7" r="3" fill="#505050"/><path d="M13 10q2 2 0 4" fill="none" stroke="#8090c0"/></svg>
            <svg viewBox="0 0 16 16"><path d="M0 0h16v16H0z" fill="#081850"/><circle cx="8" cy="8" r="2" fill="#f8f040"/><path d="M5 4q-2 4 0 8M11 4q2 4 0 8M3 2q-3 6 0 12M13 2q3 6 0 12" fill="none" stroke="#f0f0a0"/></svg>
            <time>15:31</time>
        </div>
    </footer>
</body>
</html>
```
FILE: styles.css
```css
* {
    box-sizing: border-box;
}
body {
    margin: 0;
    height: 100vh;
    overflow: hidden;
    display: flex;
    flex-direction: column;
    background: #d4d0c8;
    color: #000;
    font-family: "Liberation Sans", Arial, sans-serif;
    font-size: 11px;
    line-height: 14px;
}
button, input, select, textarea {
    font: inherit;
    color: inherit;
    margin: 0;
    padding: 0;
    border-radius: 0;
}
button {
    display: flex;
    align-items: center;
    justify-content: center;
    flex: none;
    background: #d4d0c8;
    border: 1px solid;
    border-color: #fff #404040 #404040 #fff;
    box-shadow: inset -1px -1px #808080;
}
b {
    font-size: 12px;
}
label, .end {
    white-space: nowrap;
}
.defs {
    display: none;
}
text {
    font-size: 5px;
    font-weight: bold;
    fill: #fff;
}

/* Title bars */
.titlebar {
    display: flex;
    align-items: center;
    flex: none;
    height: 18px;
    padding: 0 2px;
    background: linear-gradient(90deg, #0a246a, #a6caf0);
    color: #fff;
}
.titlebar.inactive {
    background: linear-gradient(90deg, #808080, #c0c0c0);
    color: #d4d0c8;
}
.titlebar h1, .titlebar h2 {
    flex: 1;
    margin: 0 0 0 4px;
    font-family: "DejaVu Sans Condensed", "DejaVu Sans", sans-serif;
    font-size: 11px;
    font-weight: bold;
}
.titlebar h2 {
    margin-left: 2px;
}
.titlebar h2 span {
    display: inline-block;
    width: 32px;
}
.i16 {
    width: 16px;
    height: 16px;
}
.boxed {
    background: #d4d0c8;
}
.winbtns {
    display: flex;
}
.winbtns button {
    width: 16px;
    height: 14px;
    color: #000;
}
.winbtns button:last-child {
    margin-left: 2px;
}
.winbtns svg {
    width: 12px;
    height: 10px;
}

/* Menu and toolbar */
.menu {
    display: flex;
    gap: 11px;
    flex: none;
    height: 22px;
    padding: 3px 5px;
    border-bottom: 1px solid #fff;
    box-shadow: inset 0 -1px #808080;
}
.menu a {
    color: #000;
    text-decoration: none;
}
.toolbar {
    display: flex;
    gap: 56px;
    flex: none;
    padding: 1px 7px;
    background: #c0c0c0;
}
.tools {
    display: flex;
    flex-direction: column;
    gap: 2px;
    padding-bottom: 3px;
}
.toolrow {
    display: flex;
    align-items: center;
    gap: 18px;
}
.toolrow .check {
    margin-left: -8px;
}
.group {
    display: flex;
    gap: 2px;
}
.group.wide {
    margin-left: 4px;
}
.group button {
    width: 22px;
    height: 22px;
    background: #c8c8c8;
    border-color: #fff #000 #000 #fff;
}
.group button.on {
    background: #808080;
}
.group svg {
    width: 16px;
    height: 16px;
}
.info {
    display: grid;
    grid-template-columns: 76px 76px;
    grid-template-rows: 24px 20px;
}
.info b {
    font-size: 11px;
}

/* Workspace and windows */
.workspace {
    position: relative;
    flex: 1;
    min-height: 0;
    overflow: hidden;
    background: #808080;
    border: 2px solid;
    border-color: #404040 #d4d0c8 #fff #606060;
}
.window {
    position: absolute;
    isolation: isolate;
    padding: 3px;
    background: #c0c0c0;
    border: 1px solid;
    border-color: #d4d0c8 #404040 #404040 #d4d0c8;
    box-shadow: inset 1px 1px #fff, inset -1px -1px #808080;
}
.basics {
    left: 32px;
    top: 35px;
    width: 623px;
}
.positions {
    left: 629px;
    top: 119px;
    width: 576px;
}
.client {
    display: flex;
    flex-direction: column;
    gap: 2px;
    margin-top: 1px;
    padding: 2px 9px 15px 3px;
    border: 2px solid;
    border-color: #606060 #f0f0f0 #f0f0f0 #606060;
}
.positions .client {
    padding: 2px 7px 9px 5px;
}
.panel {
    border: 1px solid;
    border-color: #fff #000 #000 #fff;
}
.side {
    display: flex;
    gap: 4px;
}
.side.contact {
    gap: 12px;
}

/* Rows of fields */
.rows, .article, .amounts, .order, .purchase, .details {
    display: flex;
    flex-direction: column;
    gap: 1px;
}
.row {
    display: flex;
    align-items: flex-end;
    gap: 5px;
    min-height: 20px;
}
.right {
    justify-content: flex-end;
}
.end {
    margin-left: auto;
}
.grow {
    flex: 1;
    min-width: 0;
}
.lbl {
    flex: none;
    text-align: right;
}
.basics .lbl {
    width: 114px;
    padding-right: 5px;
}
.positions .lbl {
    width: 116px;
    padding-right: 3px;
}
.positions .lbl.near, .misc .lbl.near {
    padding-right: 0;
}
.misc .lbl {
    width: 115px;
    padding-right: 2px;
}
input:not([type]), textarea, .combo {
    height: 20px;
    background: #fff;
    border: 1px solid;
    border-color: #808080 #fff #fff #808080;
    box-shadow: inset 1px 1px #404040, inset -1px -1px #d4d0c8;
    outline: none;
    resize: none;
}
input:not([type]) {
    padding-left: 2px;
}
input:not([type]):disabled, .combo:has(:disabled) {
    background: #c0c0c0;
}
.combo {
    position: relative;
    flex: none;
    height: 21px;
}
.combo.grow, .six .combo {
    flex: 1;
}
.combo select {
    display: block;
    width: 100%;
    height: 100%;
    padding-left: 4px;
    appearance: none;
    background: none;
    border: 0;
    outline: none;
    opacity: 1;
}
.combo select:disabled {
    color: #808080;
}
.combo::before {
    content: "";
    position: absolute;
    right: 1px;
    top: 1px;
    bottom: 1px;
    width: 16px;
    background: #d4d0c8;
    border: 1px solid;
    border-color: #fff #404040 #404040 #fff;
    box-shadow: inset -1px -1px #808080;
    pointer-events: none;
}
.combo::after {
    content: "";
    position: absolute;
    right: 5px;
    top: 8px;
    border: 4px solid transparent;
    border-top-color: #000;
    border-bottom: 0;
    pointer-events: none;
}
.combo:has(:disabled)::after {
    border-top-color: #808080;
    filter: drop-shadow(1px 1px 0 #fff);
}
.pair {
    display: flex;
    align-items: flex-end;
    justify-content: space-between;
    gap: 2px;
}
.six {
    display: flex;
    flex: 1;
    gap: 7px;
}
.w22 { width: 22px; }
.w30 { width: 30px; }
.w34 { width: 34px; }
.w44 { width: 44px; }
.w48 { width: 48px; }
.w56 { width: 56px; }
.w60 { width: 60px; }
.w65 { width: 65px; }
.w70 { width: 70px; }
.w76 { width: 76px; }
.w82 { width: 82px; }
.w88 { width: 88px; }
.w93 { width: 93px; }
.w102 { width: 102px; }
.w104 { width: 104px; }
.w106 { width: 106px; }
.w112 { width: 112px; }
.w118 { width: 118px; }
.w120 { width: 120px; }
.w124 { width: 124px; }
.w150 { width: 150px; }
.w174 { width: 174px; }
.w196 { width: 196px; }
.w222 { width: 222px; }
.w245 { width: 245px; }

/* Memo box with its scroll bar */
.memo {
    display: flex;
    flex: 1;
    padding: 1px;
    border: 1px solid;
    border-color: #606060 #fff #fff #606060;
    box-shadow: inset 1px 1px #606060;
}
.memo textarea {
    flex: 1;
    min-width: 0;
    height: auto;
    background: #c0c0c0;
    border: 0;
    box-shadow: none;
}
.scroll {
    display: flex;
    flex-direction: column;
    justify-content: space-between;
    width: 16px;
    background: #e0e0dc;
}
.scroll button {
    width: 16px;
    height: 16px;
}
.scroll svg {
    width: 8px;
    height: 8px;
}

/* Buttons */
.btn {
    height: 19px;
    padding: 0 8px;
    border-color: #fff #808080 #808080 #fff;
}
.typ {
    width: 114px;
    height: 22px;
    margin: 0 2px 0 14px;
}
.icon {
    background: #c0c0c0;
    border-color: #fff #000 #000 #fff;
}
.icon.big {
    width: 36px;
    height: 36px;
}
.big svg {
    width: 32px;
    height: 32px;
}
.lens {
    width: 27px;
    height: 30px;
}
.lens svg {
    width: 20px;
    height: 20px;
}
.table-btn {
    width: 30px;
    height: 20px;
}
.table-btn svg {
    width: 24px;
    height: 16px;
}

/* Check boxes and radios */
.check {
    display: flex;
    align-items: center;
    gap: 6px;
}
.check input {
    appearance: none;
    flex: none;
    width: 12px;
    height: 12px;
    background: #fff;
    border: 1px solid;
    border-color: #808080 #fff #fff #808080;
    box-shadow: inset 1px 1px #404040;
}
.check input:disabled {
    background: #d0ccc4;
}
.check input[type="radio"] {
    border-radius: 50%;
}
.check input[type="radio"]:checked {
    background: radial-gradient(circle, #808080 2px, #d0ccc4 3px);
}
.off {
    color: #808080;
    text-shadow: 1px 1px #fff;
}

/* Tabs */
.tabs {
    display: flex;
    margin-top: 1px;
}
.tab {
    flex: 1;
    height: 22px;
    background: #c0c0c0;
    border: 1px solid #000;
    border-bottom: 0;
    border-radius: 6px 6px 0 0;
    box-shadow: inset 1px 1px #e8e8e8;
}
.tab.active {
    z-index: 1;
    height: 24px;
    margin-bottom: -3px;
    padding-bottom: 1px;
    box-shadow: inset 2px 2px #fff;
    font-size: 12px;
    font-weight: bold;
}
.tab-rest {
    flex: 1;
}
.sheet {
    margin-top: -3px;
    border: 1px solid #000;
    box-shadow: inset 2px 2px #fff, inset -2px -2px #808080;
}

/* Grunddaten */
.order {
    flex: 1;
    padding: 6px 3px 3px 0;
}
.clerk {
    display: flex;
    flex-direction: column;
    gap: 2px;
    width: 159px;
    padding: 7px 6px 0 5px;
}
.project, .head {
    align-items: center;
}
.project {
    padding: 3px 6px 3px 0;
}
.stich {
    margin-left: 80px;
}
.address {
    width: 327px;
    padding: 5px 6px 5px 0;
}
.address .row:last-child {
    margin-top: 2px;
}
.address .row:first-child {
    align-items: center;
}
.mail {
    display: flex;
    gap: 4px;
    flex: 1;
    padding: 2px 4px 2px 5px;
}
.mail-btns {
    display: flex;
    flex-direction: column;
    gap: 5px;
}
.mail-btns .btn {
    width: 46px;
    padding: 0;
}
.misc {
    display: flex;
    flex-direction: column;
    gap: 3px;
    padding: 8px 11px 6px 10px;
}
.purchase {
    padding: 2px 3px 3px 0;
}
.division {
    padding: 3px 12px 2px 0;
}
.division .six {
    gap: 10px;
}
.pay-grid {
    display: grid;
    grid-template-columns: 285px 1fr;
    grid-template-rows: 75px 72px;
    gap: 3px 9px;
}
.pay {
    display: flex;
    flex-direction: column;
    gap: 3px;
    padding: 4px 5px 2px 6px;
}
.checks {
    display: grid;
    grid-template-columns: 75px 1fr;
    align-content: center;
    grid-auto-rows: 21px;
    padding-left: 6px;
}
.checks.invoice {
    grid-template-columns: 137px 1fr;
}

/* Positionsdaten */
.head {
    padding: 2px 8px 2px 0;
}
.positions .head .lbl {
    width: 113px;
}
.push {
    margin-left: 20px;
}
.article {
    padding: 3px 5px 5px 0;
}
.article .check {
    margin-left: 3px;
    gap: 5px;
    height: 20px;
}
.article .memo-row {
    align-items: stretch;
    height: 60px;
}
.describe {
    display: flex;
    flex-direction: column;
    align-items: flex-end;
    gap: 11px;
}
.positions .describe {
    padding: 2px 3px 0 0;
}
.describe .lens {
    margin-right: -3px;
}
.article .memo {
    margin-bottom: 1px;
}
.split {
    display: flex;
    gap: 3px;
}
.split .icon {
    margin-top: 3px;
}
.count:not([type]) {
    width: 16px;
    background: #c0c0c0;
    text-align: center;
}
.amounts {
    padding: 3px 6px 4px 0;
}
.rabatt {
    width: 69px;
    text-align: right;
}
.apart {
    margin-left: 5px;
}
.details {
    gap: 3px;
    padding: 6px 5px 10px 0;
}
.vom {
    padding-right: 3px;
}
.mwst {
    display: flex;
    gap: 14px;
}

/* Window footers */
.foot {
    display: flex;
    gap: 3px;
    margin-top: 2px;
    padding-left: 2px;
}
.positions .foot {
    margin-top: 7px;
    padding-left: 1px;
}
.status-fields {
    display: flex;
    flex: 1;
    flex-direction: column;
    justify-content: space-between;
    padding-left: 4px;
}
.basics .status-fields label {
    padding-left: 2px;
}
.positions .status-fields {
    margin-top: -4px;
    align-items: flex-end;
}
.positions .status-fields .check {
    width: 243px;
}
.positions .status-fields .row {
    gap: 3px;
}

/* Status bar */
.statusbar {
    display: flex;
    align-items: flex-end;
    justify-content: flex-end;
    gap: 8px;
    flex: none;
    height: 21px;
    padding: 0 7px 1px;
}
.cell {
    width: 28px;
    height: 15px;
    border: 1px solid;
    border-color: #808080 #fff #fff #808080;
    text-align: center;
}
.cell.num {
    width: auto;
}
.cell:first-child {
    position: relative;
}
.cell:first-child::before {
    content: "";
    position: absolute;
    left: -10px;
    bottom: 0;
    height: 20px;
    border-left: 1px solid #000;
}

/* Taskbar */
.taskbar {
    display: flex;
    align-items: center;
    flex: none;
    height: 29px;
    padding: 0 3px 0 2px;
    border-top: 1px solid #fff;
}
.task {
    justify-content: flex-start;
    gap: 4px;
    width: 160px;
    height: 22px;
    padding: 0 3px;
}
.task svg, .quick svg, .tray svg {
    flex: none;
    width: 16px;
    height: 16px;
}
.start {
    width: 51px;
    gap: 2px;
    padding: 0 1px;
    font-weight: bold;
}
.current {
    background: #ece9e4;
    border-color: #404040 #fff #fff #404040;
    box-shadow: inset 1px 1px #808080;
    font-weight: bold;
}
.quick {
    display: flex;
    gap: 7px;
    margin: 0 6px 0 8px;
    padding: 2px 16px 2px 8px;
    border-left: 2px groove #fff;
    border-right: 2px groove #fff;
}
.quick button {
    background: none;
    border: 0;
    box-shadow: none;
}
.tasks {
    display: flex;
    gap: 3px;
    flex: 1;
}
.lang {
    margin-right: 3px;
    padding: 1px 0;
    background: #0a246a;
    color: #fff;
    font-size: 10px;
}
.tray {
    display: flex;
    align-items: center;
    gap: 2px;
    height: 24px;
    padding: 0 7px 0 3px;
    border: 1px solid;
    border-color: #808080 #fff #fff #808080;
}
.tray time {
    margin-left: 3px;
}
```
